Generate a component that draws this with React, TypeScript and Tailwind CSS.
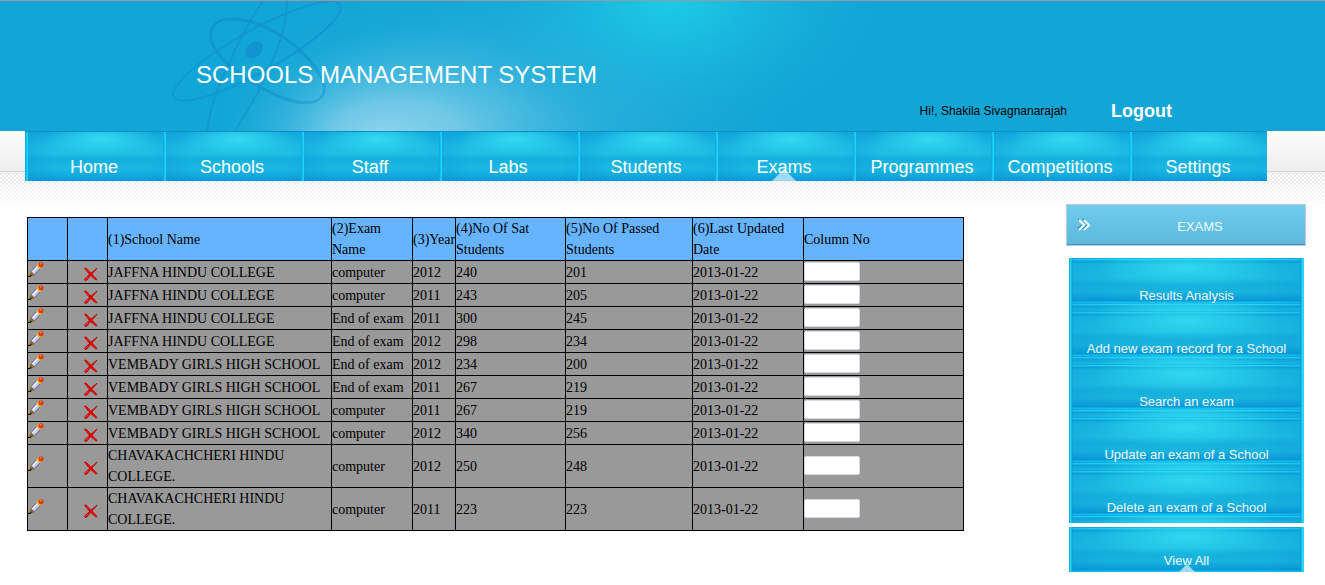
import React, { useState } from 'react';

interface ExamRecord {
  id: number;
  school: string;
  exam: string;
  year: number;
  sat: number;
  passed: number;
  updated: string;
}

const navItems = ['Home', 'Schools', 'Staff', 'Labs', 'Students', 'Exams', 'Programmes', 'Competitions', 'Settings'];

const examLinks = [
  'Results Analysis',
  'Add new exam record for a School',
  'Search an exam',
  'Update an exam of a School',
  'Delete an exam of a School',
];

const records: ExamRecord[] = [
  { id: 1, school: 'JAFFNA HINDU COLLEGE', exam: 'computer', year: 2012, sat: 240, passed: 201, updated: '2013-01-22' },
  { id: 2, school: 'JAFFNA HINDU COLLEGE', exam: 'computer', year: 2011, sat: 243, passed: 205, updated: '2013-01-22' },
  { id: 3, school: 'JAFFNA HINDU COLLEGE', exam: 'End of exam', year: 2011, sat: 300, passed: 245, updated: '2013-01-22' },
  { id: 4, school: 'JAFFNA HINDU COLLEGE', exam: 'End of exam', year: 2012, sat: 298, passed: 234, updated: '2013-01-22' },
  { id: 5, school: 'VEMBADY GIRLS HIGH SCHOOL', exam: 'End of exam', year: 2012, sat: 234, passed: 200, updated: '2013-01-22' },
  { id: 6, school: 'VEMBADY GIRLS HIGH SCHOOL', exam: 'End of exam', year: 2011, sat: 267, passed: 219, updated: '2013-01-22' },
  { id: 7, school: 'VEMBADY GIRLS HIGH SCHOOL', exam: 'computer', year: 2011, sat: 267, passed: 219, updated: '2013-01-22' },
  { id: 8, school: 'VEMBADY GIRLS HIGH SCHOOL', exam: 'computer', year: 2012, sat: 340, passed: 256, updated: '2013-01-22' },
  { id: 9, school: 'CHAVAKACHCHERI HINDU COLLEGE.', exam: 'computer', year: 2012, sat: 250, passed: 248, updated: '2013-01-22' },
  { id: 10, school: 'CHAVAKACHCHERI HINDU COLLEGE.', exam: 'computer', year: 2011, sat: 223, passed: 223, updated: '2013-01-22' },
];

function HeaderArt() {
  return (
    <svg className="absolute left-0 top-0" width="960" height="130" viewBox="0 0 960 130" aria-hidden="true">
      <defs>
        <radialGradient id="haze">
          <stop offset="0" stopColor="#40b8e0" stopOpacity="0.8" />
          <stop offset="0.5" stopColor="#30b1dc" stopOpacity="0.5" />
          <stop offset="1" stopColor="#12a6d6" stopOpacity="0" />
        </radialGradient>
        <radialGradient id="glow" fx="0.4" fy="0.5">
          <stop offset="0" stopColor="#98d8ee" stopOpacity="0.95" />
          <stop offset="0.35" stopColor="#86d0ea" stopOpacity="0.75" />
          <stop offset="0.65" stopColor="#5cc2e3" stopOpacity="0.4" />
          <stop offset="1" stopColor="#35b3dd" stopOpacity="0" />
        </radialGradient>
        <radialGradient id="shine">
          <stop offset="0" stopColor="#1bcbe8" />
          <stop offset="0.25" stopColor="#1cc4e4" stopOpacity="0.8" />
          <stop offset="0.6" stopColor="#1dbae0" stopOpacity="0.35" />
          <stop offset="1" stopColor="#12a6d6" stopOpacity="0" />
        </radialGradient>
        <linearGradient id="orbit" x1="240" y1="40" x2="310" y2="130" gradientUnits="userSpaceOnUse">
          <stop offset="0" stopColor="#1193cf" stopOpacity="0.85" />
          <stop offset="0.5" stopColor="#1193cf" stopOpacity="0.7" />
          <stop offset="1" stopColor="#1193cf" stopOpacity="0.3" />
        </linearGradient>
      </defs>
      <ellipse cx="500" cy="110" rx="300" ry="150" fill="url(#haze)" />
      <ellipse cx="420" cy="140" rx="195" ry="115" fill="url(#glow)" />
      <ellipse cx="670" cy="0" rx="220" ry="140" fill="url(#shine)" />
      <g fill="none" stroke="url(#orbit)" strokeWidth="2">
        <ellipse cx="257" cy="50" rx="95" ry="21" transform="rotate(-29 257 50)" stroke="#1193cf" strokeOpacity="0.8" />
        <path d="M211 38C209 22 220 17 236 18C262 20 292 38 311 61C325 78 329 92 318 99C303 107 275 96 250 80C228 65 213 50 211 38Z" strokeWidth="3" />
        <path d="M263 0C248 22 238 42 230 60C218 84 210 106 207 130" />
        <path d="M287 0C287 30 274 58 257 93C250 106 242 118 235 130" />
        <ellipse cx="254" cy="49" rx="10" ry="7" transform="rotate(-42 254 49)" fill="#1193cf" stroke="none" />
      </g>
    </svg>
  );
}

function PencilIcon() {
  return (
    <svg width="16" height="16" viewBox="0 0 16 16" aria-hidden="true">
      <path d="M0 14.500h3" stroke="#000" strokeWidth="1" />
      <path d="M1.500 15L2.500 9.500L7 13z" fill="#8a6a14" />
      <path d="M1.500 15L2 12.500L4 14z" fill="#2b2208" />
      <path d="M5 11L11 4.500" stroke="#5d6296" strokeWidth="5.500" />
      <path d="M5 11L11 4.500" stroke="#c6caf4" strokeWidth="4" />
      <path d="M4.500 10L10 4" stroke="#f4f5ff" strokeWidth="1.200" />
      <path d="M10.200 5.300L12.800 2.500" stroke="#f2bd00" strokeWidth="5.500" />
      <circle cx="13" cy="2.800" r="2.600" fill="#de3a1e" />
      <circle cx="12.800" cy="1.800" r="0.800" fill="#ff9a80" />
    </svg>
  );
}

function DeleteIcon() {
  return (
    <svg width="16" height="16" viewBox="0 0 16 16" aria-hidden="true">
      <path d="M1.500 2.200L3 2L8 7.200L14 13.500L13 14L7 9z" fill="#dc0000" stroke="#dc0000" strokeWidth="1" />
      <path d="M14 2L13.500 3L8 9L4 14L2 14.500L1.500 13L7 8z" fill="#dc0000" stroke="#c40000" strokeWidth="0.800" />
      <path d="M2.500 13.500L5 11" stroke="#ff4a3a" strokeWidth="1" />
    </svg>
  );
}

function ActiveMarker({ small }: { small?: boolean }) {
  return (
    <svg
      className="absolute bottom-0 left-1/2 -translate-x-1/2"
      width={small ? 16 : 24}
      height={small ? 8 : 12}
      viewBox="0 0 24 12"
      aria-hidden="true"
    >
      <path d="M12 0L24 12H0z" fill="#9edbf4" />
    </svg>
  );
}

function NavTab({ label, active }: { label: string; active: boolean }) {
  return (
    <li className="min-w-0 flex-1">
      <a
        href="#"
        className="relative block h-[50px] border-t border-t-[#0b8fc4] bg-[linear-gradient(90deg,#12a9dc_1px,#02c6f8_1px,#2bd2f6_3px,transparent_3px),radial-gradient(ellipse_40%_34%_at_55%_14%,#34daf1,#34daf100),linear-gradient(90deg,#0a90d655,#0a90d600_22%,#0a90d600_88%,#0a90d622),linear-gradient(#12a8dc,#1fbfe4_30%,#1fbfe4_45%,#13b0de_55%,#1ab8e2_75%,#12aade_88%,#0a98da)] pt-[23px] text-center text-lg leading-6 text-white"
      >
        {active && <ActiveMarker />}
        <span className="relative">{label}</span>
      </a>
    </li>
  );
}

function SideLink({ label, last }: { label: string; last?: boolean }) {
  return (
    <a
      href="#"
      className={`relative block bg-[linear-gradient(90deg,#0fb4e6_1px,#2ad6f6_1px,#2ad6f6_2px,#0c9cd8_3px,transparent_4px,transparent_231px,#0c9cd8_232px,#2ad6f6_233px),radial-gradient(ellipse_38%_44%_at_50%_22%,#30d8f0,#30d8f000),linear-gradient(90deg,#0a90d644,#0a90d600_22%,#0a90d600_80%,#0a90d644),linear-gradient(#10b0e0_1px,#22d2f4_1px,#22d2f4_2px,#0ea0d4_3px,#18b8e0_6px,#1ebde2_20px,#14b0dc_26px,#18b4de_34px,#0a96d6_43px,#10c4f2_44px)] bg-[length:100%_45px] text-center text-[13px] leading-[22px] text-[#eefaff] ${
        last ? 'mt-1 h-[45px] pt-[23px]' : 'h-[53px] pt-[27px]'
      }`}
    >
      {last && <ActiveMarker small />}
      <span className="relative">{label}</span>
    </a>
  );
}

export default function App() {
  const [columnNos, setColumnNos] = useState<{ [id: number]: string }>({});

  return (
    <div className="bg-white font-['Liberation_Sans',Arial,sans-serif]">
      {/* Header */}
      <header className="relative h-[131px] border-t border-[#9a9a9a] bg-[#12a6d6]">
        <HeaderArt />
        <div className="relative pt-[58px]">
          <h1 className="pl-[196px] text-2xl leading-8 text-white">SCHOOLS MANAGEMENT SYSTEM</h1>
          <div className="flex items-center justify-end gap-11 pr-[153px] pt-2">
            <span className="text-xs leading-6 text-black">Hi!, Shakila Sivagnanarajah</span>
            <a href="#" className="text-lg font-bold leading-6 text-white">Logout</a>
          </div>
        </div>
      </header>

      {/* Navigation over the grey strip and the dotted fade */}
      <div className="bg-[linear-gradient(#fdfdfd,#eeeeee_40px,#d4d4d4_40px,#d4d4d4_41px,transparent_41px),linear-gradient(#ffffff00_41px,#ffffff_78px),repeating-conic-gradient(#e4e4e4_0_25%,#ffffff_0_50%)] bg-[length:100%_100%,100%_100%,4px_4px] pb-[23px]">
        <nav className="pl-[25px] pr-[58px]">
          <ul className="flex">
            {navItems.map((item) => (
              <NavTab key={item} label={item} active={item === 'Exams'} />
            ))}
          </ul>
        </nav>
      </div>

      <div className="flex items-start pl-[27px] pr-[19px]">
        {/* Exam records */}
        <main className="mr-[102px] min-w-0 flex-1 pt-[13px]">
          <table className="w-full table-fixed border-collapse font-['Liberation_Serif','Times_New_Roman',serif] text-sm leading-[21px] text-black [&_td]:border [&_td]:border-black [&_td]:p-0 [&_th]:border [&_th]:border-black [&_th]:p-0 [&_th]:text-left [&_th]:font-normal">
            <colgroup>
              <col className="w-[40px]" />
              <col className="w-[40px]" />
              <col />
              <col className="w-[81px]" />
              <col className="w-[43px]" />
              <col className="w-[110px]" />
              <col className="w-[127px]" />
              <col className="w-[111px]" />
              <col className="w-[160px]" />
            </colgroup>
            <thead>
              <tr className="bg-[#66b3ff]">
                <th aria-label="Edit"></th>
                <th aria-label="Delete"></th>
                <th>(1)School Name</th>
                <th>(2)Exam Name</th>
                <th className="whitespace-nowrap">(3)Year</th>
                <th>(4)No Of Sat Students</th>
                <th>(5)No Of Passed Students</th>
                <th>(6)Last Updated Date</th>
                <th>Column No</th>
              </tr>
            </thead>
            <tbody>
              {records.map((r) => (
                <tr key={r.id} className="h-[23px] bg-[#999999]">
                  <td>
                    <button type="button" aria-label="Edit record" className="block cursor-pointer pb-1">
                      <PencilIcon />
                    </button>
                  </td>
                  <td>
                    <button type="button" aria-label="Delete record" className="ml-[15px] block cursor-pointer pt-1">
                      <DeleteIcon />
                    </button>
                  </td>
                  <td>{r.school}</td>
                  <td>{r.exam}</td>
                  <td>{r.year}</td>
                  <td>{r.sat}</td>
                  <td>{r.passed}</td>
                  <td>{r.updated}</td>
                  <td>
                    <input
                      type="text"
                      aria-label={`Column No for record ${r.id}`}
                      value={columnNos[r.id] || ''}
                      onChange={(e) => setColumnNos({ ...columnNos, [r.id]: e.target.value })}
                      className="mb-0.5 block h-[19px] w-14 rounded-xs border border-[#d3dce4] bg-white px-1 text-xs outline-none"
                    />
                  </td>
                </tr>
              ))}
            </tbody>
          </table>
        </main>

        {/* Exam menu */}
        <aside className="w-60 shrink-0">
          <h2 className="flex h-[42px] items-center border border-[#c6c9cb] bg-[linear-gradient(#70cdee,#5cb8dc_39px,#3498d0_39px)] text-[13px] text-[#eefaff]">
            <svg className="ml-2.5" width="14" height="14" viewBox="0 0 14 14" aria-hidden="true">
              <path d="M1 1l5 5-5 5M6 1l5 5-5 5" fill="none" stroke="#2389bd" strokeWidth="1.500" />
              <path d="M2 2l5 5-5 5M7 2l5 5-5 5" fill="none" stroke="#fff" strokeWidth="2" />
            </svg>
            <span className="flex-1 pl-1 pt-1 text-center">EXAMS</span>
          </h2>
          <nav className="mt-3 pl-[3px] pr-[2px]">
            {examLinks.map((link) => (
              <SideLink key={link} label={link} />
            ))}
            <SideLink label="View All" last />
          </nav>
        </aside>
      </div>
    </div>
  );
}
